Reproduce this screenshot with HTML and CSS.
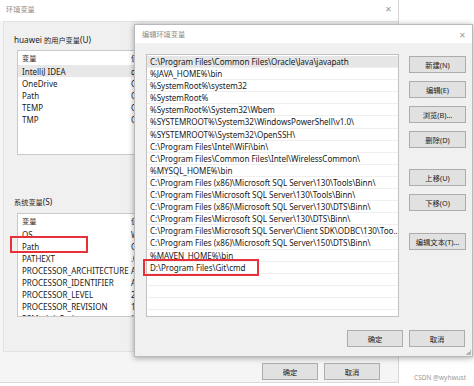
FILE: index.html
```html
<!DOCTYPE html>
<html lang="zh-CN">
<head>
    <meta charset="utf-8">
    <title>环境变量</title>
    <link rel="stylesheet" href="styles.css">
</head>
<body>
    <div class="desktop">

        <div class="win back">
            <div class="titlebar">
                <span class="title">环境变量</span>
                <span class="close">&#x2715;</span>
            </div>
            <div class="panel">
                <div class="grouplabel">huawei <span class="zh">的用户变量</span>(U)</div>
                <div class="vars user">
                    <div class="vrow head"><span class="c1 zh">变量</span><span class="c2 zh">值</span></div>
                    <div class="vrow sel"><span class="c1">IntelliJ IDEA</span><span class="c2">d</span></div>
                    <div class="vrow"><span class="c1">OneDrive</span><span class="c2">C</span></div>
                    <div class="vrow"><span class="c1">Path</span><span class="c2">C</span></div>
                    <div class="vrow"><span class="c1">TEMP</span><span class="c2">C</span></div>
                    <div class="vrow"><span class="c1">TMP</span><span class="c2">C</span></div>
                </div>
                <div class="grouplabel sys"><span class="zh">系统变量</span>(S)</div>
                <div class="vars system">
                    <div class="vrow head"><span class="c1 zh">变量</span><span class="c2 zh">值</span></div>
                    <div class="vrow"><span class="c1">OS</span><span class="c2">W</span></div>
                    <div class="vrow"><span class="c1">Path</span><span class="c2">C</span></div>
                    <div class="vrow"><span class="c1">PATHEXT</span><span class="c2">.C</span></div>
                    <div class="vrow"><span class="c1">PROCESSOR_ARCHITECTURE</span><span class="c2">A</span></div>
                    <div class="vrow"><span class="c1">PROCESSOR_IDENTIFIER</span><span class="c2">A</span></div>
                    <div class="vrow"><span class="c1">PROCESSOR_LEVEL</span><span class="c2">2</span></div>
                    <div class="vrow"><span class="c1">PROCESSOR_REVISION</span><span class="c2">1</span></div>
                    <div class="vrow"><span class="c1">PSModulePath</span><span class="c2">%</span></div>
                </div>
            </div>
            <div class="footer">
                <button class="btn">确定</button>
                <button class="btn">取消</button>
            </div>
        </div>

        <!-- red annotation on the Path row -->
        <div class="mark mark-path"></div>

        <div class="win front">
            <div class="titlebar">
                <span class="title">编辑环境变量</span>
                <span class="close">&#x2715;</span>
            </div>
            <div class="body">
                <div class="pathlist">
                    <div class="prow sel">C:\Program Files\Common Files\Oracle\Java\javapath</div>
                    <div class="prow">%JAVA_HOME%\bin</div>
                    <div class="prow">%SystemRoot%\system32</div>
                    <div class="prow">%SystemRoot%</div>
                    <div class="prow">%SystemRoot%\System32\Wbem</div>
                    <div class="prow">%SYSTEMROOT%\System32\WindowsPowerShell\v1.0\</div>
                    <div class="prow">%SYSTEMROOT%\System32\OpenSSH\</div>
                    <div class="prow">C:\Program Files\Intel\WiFi\bin\</div>
                    <div class="prow">C:\Program Files\Common Files\Intel\WirelessCommon\</div>
                    <div class="prow">%MYSQL_HOME%\bin</div>
                    <div class="prow">C:\Program Files (x86)\Microsoft SQL Server\130\Tools\Binn\</div>
                    <div class="prow">C:\Program Files\Microsoft SQL Server\130\Tools\Binn\</div>
                    <div class="prow">C:\Program Files (x86)\Microsoft SQL Server\130\DTS\Binn\</div>
                    <div class="prow">C:\Program Files\Microsoft SQL Server\130\DTS\Binn\</div>
                    <div class="prow">C:\Program Files\Microsoft SQL Server\Client SDK\ODBC\130\Too...</div>
                    <div class="prow">C:\Program Files (x86)\Microsoft SQL Server\150\DTS\Binn\</div>
                    <div class="prow">%MAVEN_HOME%\bin</div>
                    <div class="prow">D:\Program Files\Git\cmd</div>
                    <div class="prow"></div>
                    <div class="prow"></div>
                    <div class="prow"></div>
                    <div class="prow"></div>
                </div>
                <div class="sidebtns">
                    <button class="btn">新建(N)</button>
                    <button class="btn">编辑(E)</button>
                    <button class="btn">浏览(B)...</button>
                    <button class="btn">删除(D)</button>
                    <button class="btn group">上移(U)</button>
                    <button class="btn">下移(O)</button>
                    <button class="btn group2">编辑文本(T)...</button>
                </div>
            </div>
            <div class="footer">
                <button class="btn">确定</button>
                <button class="btn">取消</button>
            </div>
            <div class="grip"></div>
        </div>

        <div class="mark mark-git"></div>

        <div class="watermark">CSDN @wyhwust</div>
    </div>
</body>
</html>
```

FILE: styles.css
```css
body,html{
    margin: 0;
    padding: 0;
    background-color: #ffffff;
}
.desktop{
    position: relative;
    width: 474px;
    height: 386px;
    overflow: hidden;
    font-family: "Noto Sans", "Noto Sans CJK SC", sans-serif;
    font-size: 8.2px;
    color: #1a1a1a;
}
.zh{
    font-size: 7.2px;
}

/* windows */
.win{
    position: absolute;
    box-sizing: border-box;
    background-color: #f0f0f0;
    display: flex;
    flex-direction: column;
}
.back{
    left: 0;
    top: 0;
    width: 399px;
    height: 383px;
    background-color: #f5f5f5;
    border-right: 1px solid #d6d6d6;
    border-bottom: 1px solid #dadada;
}
.front{
    left: 134px;
    top: 24px;
    width: 339px;
    height: 333px;
    border: 1px solid #b9b9b9;
    box-shadow: 0 1px 6px rgba(0, 0, 0, 0.35);
}
.titlebar{
    display: flex;
    align-items: center;
    justify-content: space-between;
    box-sizing: border-box;
    background-color: #ffffff;
    color: #8a8a8a;
    font-size: 7.2px;
    flex-shrink: 0;
}
.back .titlebar{
    height: 21px;
    padding: 0 6px 4px 6px;
}
.front .titlebar{
    height: 18px;
    padding: 0 6px 0 7px;
}
.close{
    font-size: 8px;
    color: #999;
}

/* back window panel */
.panel{
    margin: 0 0 0 3px;
    height: 331px;
    box-sizing: border-box;
    border: 1px solid #e2e2e2;
    border-right: none;
    background-color: #f0f0f0;
    padding: 12px 0 0 10px;
}
.grouplabel{
    line-height: 12px;
    height: 12px;
    white-space: nowrap;
}
.grouplabel.sys{
    margin-top: 41px;
}
.vars{
    margin: 4px 0 0 3px;
    width: 380px;
    background-color: #ffffff;
    border: 1px solid #c9c9c9;
    box-sizing: border-box;
    overflow: hidden;
    font-size: 8px;
}
.vars.user{
    height: 105px;
}
.vars.system{
    margin-top: 5px;
    height: 104px;
}
.vrow{
    display: flex;
    align-items: center;
    height: 12px;
    padding-left: 4px;
    white-space: nowrap;
}
.vrow.head{
    height: 14px;
}
.vrow.sel{
    background-color: #e8e8e8;
}
.c1{
    width: 109px;
    flex-shrink: 0;
    overflow: hidden;
}

.footer{
    display: flex;
    justify-content: flex-end;
    gap: 6px;
}
.back .footer{
    padding: 11px 18px 0 0;
}
.front .footer{
    margin-top: auto;
    padding: 0 7px 9px 0;
}
.btn{
    box-sizing: border-box;
    width: 56px;
    height: 17px;
    padding: 0;
    background-color: #e1e1e1;
    border: 1px solid #adadad;
    font-family: inherit;
    font-size: 7.3px;
    color: #1a1a1a;
}

/* front dialog body */
.body{
    display: flex;
    padding: 11px 0 0 11px;
}
.pathlist{
    width: 253px;
    height: 263px;
    box-sizing: border-box;
    background-color: #ffffff;
    border: 1px solid #c2c2c2;
    padding-top: 1px;
    overflow: hidden;
    font-size: 8.1px;
    letter-spacing: -0.05px;
}
.prow{
    height: 12.1px;
    line-height: 12px;
    box-sizing: border-box;
    padding-left: 3px;
    border-bottom: 1px solid #efefef;
    white-space: nowrap;
    overflow: hidden;
}
.prow.sel{
    background-color: #e6e6e6;
}
.sidebtns{
    display: flex;
    flex-direction: column;
    gap: 8px;
    margin: 2px 0 0 10px;
}
.sidebtns .btn{
    width: 57px;
}
.sidebtns .group{
    margin-top: 13px;
}
.sidebtns .group2{
    margin-top: 14px;
}
.grip{
    position: absolute;
    right: 1px;
    bottom: 1px;
    width: 5px;
    height: 5px;
    background: linear-gradient(135deg, transparent 50%, #b5b5b5 50%);
}

/* red annotation boxes */
.mark{
    position: absolute;
    border: 2.5px solid #e8303a;
    box-sizing: border-box;
}
.mark-path{
    left: 10px;
    top: 236px;
    width: 78px;
    height: 17px;
}
.mark-git{
    left: 143px;
    top: 259px;
    width: 116px;
    height: 17px;
}

.watermark{
    position: absolute;
    right: 8px;
    bottom: 4px;
    font-size: 6.5px;
    color: #9a9a9a;
}
```
